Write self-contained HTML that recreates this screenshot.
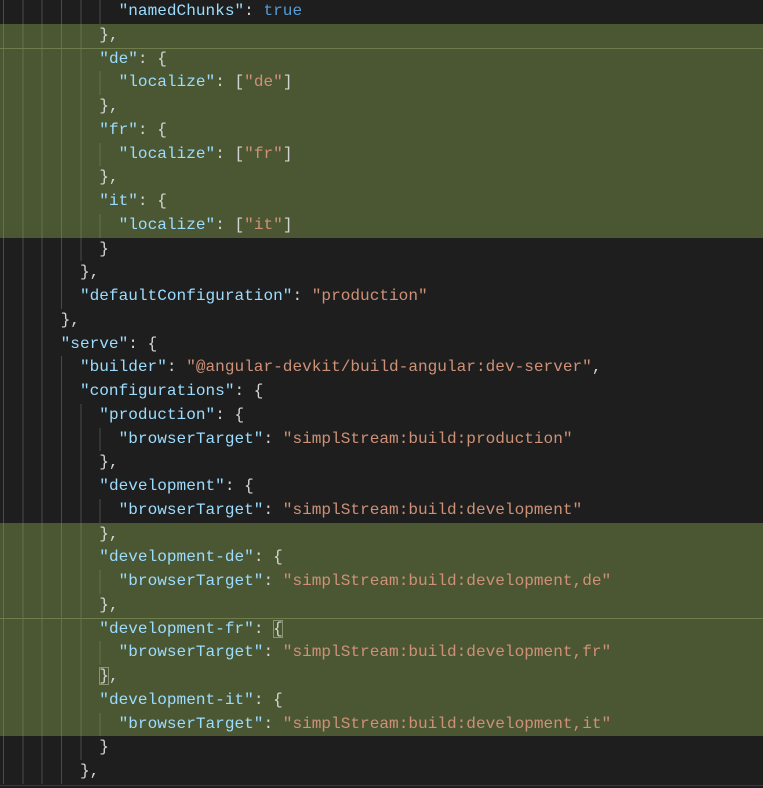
<!DOCTYPE html>
<html><head><meta charset="utf-8"><style>
body{margin:0;width:763px;height:788px;background:#1e1e1e;overflow:hidden;position:relative;font-family:"Liberation Mono",monospace;font-size:16.1px;}
.l{position:absolute;left:0;width:763px;height:23.75px;line-height:23.75px;white-space:pre;color:#d4d4d4;}
.g{background:#4b5733;}
.t{position:absolute;left:2.7px;top:0;}
.gd{position:absolute;left:2.7px;top:0;height:100%;background:repeating-linear-gradient(to right,#4a4a4a 0 1px,transparent 1px 19.33px);}
.g .gd{background:repeating-linear-gradient(to right,#66704f 0 1px,transparent 1px 19.33px);}
.k{color:#9cdcfe}.s{color:#ce9178}.b{color:#569cd6}
.sep{position:absolute;left:0;width:763px;height:1px;background:#6f7d4c;}
.bx{outline:1px solid #8a9470;outline-offset:-1px;}
</style></head><body>
<div id="c"></div>
<script>
var L=[
[12,'<span class="k">"namedChunks"</span>: <span class="b">true</span>',0],
[10,'},',1],
[10,'<span class="k">"de"</span>: {',1],
[12,'<span class="k">"localize"</span>: [<span class="s">"de"</span>]',1],
[10,'},',1],
[10,'<span class="k">"fr"</span>: {',1],
[12,'<span class="k">"localize"</span>: [<span class="s">"fr"</span>]',1],
[10,'},',1],
[10,'<span class="k">"it"</span>: {',1],
[12,'<span class="k">"localize"</span>: [<span class="s">"it"</span>]',1],
[10,'}',0],
[8,'},',0],
[8,'<span class="k">"defaultConfiguration"</span>: <span class="s">"production"</span>',0],
[6,'},',0],
[6,'<span class="k">"serve"</span>: {',0],
[8,'<span class="k">"builder"</span>: <span class="s">"@angular-devkit/build-angular:dev-server"</span>,',0],
[8,'<span class="k">"configurations"</span>: {',0],
[10,'<span class="k">"production"</span>: {',0],
[12,'<span class="k">"browserTarget"</span>: <span class="s">"simplStream:build:production"</span>',0],
[10,'},',0],
[10,'<span class="k">"development"</span>: {',0],
[12,'<span class="k">"browserTarget"</span>: <span class="s">"simplStream:build:development"</span>',0],
[10,'},',1],
[10,'<span class="k">"development-de"</span>: {',1],
[12,'<span class="k">"browserTarget"</span>: <span class="s">"simplStream:build:development,de"</span>',1],
[10,'},',1],
[10,'<span class="k">"development-fr"</span>: <span class="bx">{</span>',1],
[12,'<span class="k">"browserTarget"</span>: <span class="s">"simplStream:build:development,fr"</span>',1],
[10,'<span class="bx">}</span>,',1],
[10,'<span class="k">"development-it"</span>: {',1],
[12,'<span class="k">"browserTarget"</span>: <span class="s">"simplStream:build:development,it"</span>',1],
[10,'}',0],
[8,'},',0]
];
var h='',cw=9.665;
for(var i=0;i<L.length;i++){
 var n=L[i][0];
 h+='<div class="l'+(L[i][2]?' g':'')+'" style="top:'+(i*23.75)+'px"><div class="gd" style="width:'+(n*cw)+'px"></div><div class="t">'+' '.repeat(n)+L[i][1]+'</div></div>';
}
h+='<div class="sep" style="top:47.5px"></div><div class="sep" style="top:617.5px"></div><div class="sep" style="top:785px;background:#3a3a3a"></div>';
document.getElementById('c').innerHTML=h;
</script>
</body></html>
